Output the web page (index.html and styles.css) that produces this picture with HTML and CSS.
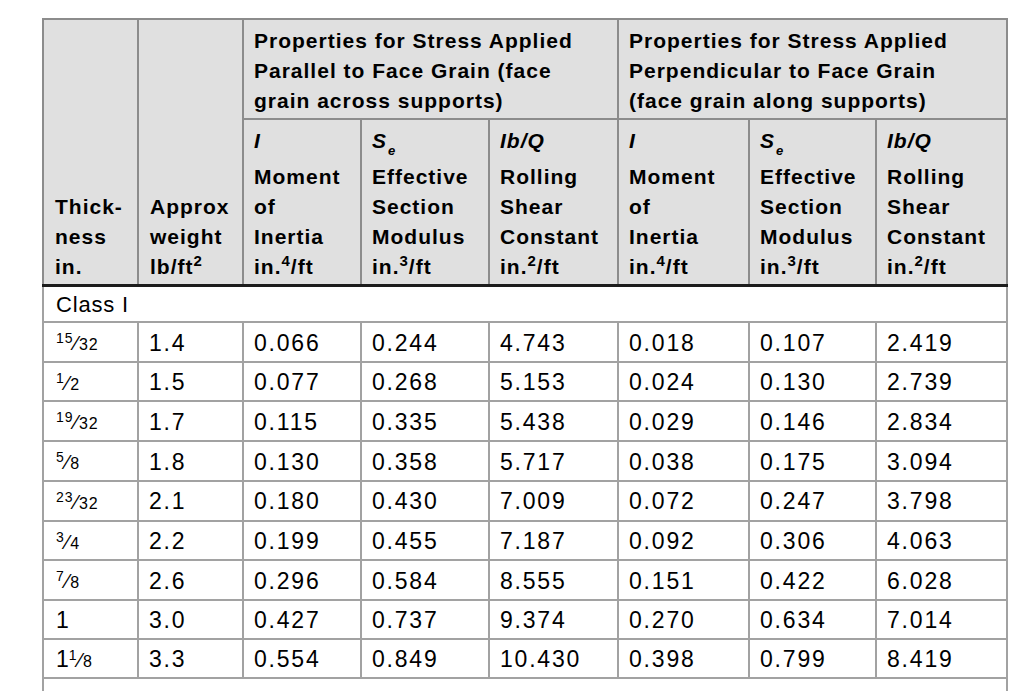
FILE: index.html
```html
<!DOCTYPE html>
<html lang="en">
<head>
<meta charset="utf-8">
<title>Plywood section properties</title>
<link rel="stylesheet" href="styles.css">
</head>
<body>
<div class="sheet">
<table class="props">
  <colgroup>
    <col class="c-thk"><col class="c-wt">
    <col class="c-a1"><col class="c-a2"><col class="c-a3">
    <col class="c-b1"><col class="c-b2"><col class="c-b3">
  </colgroup>
  <thead>
    <tr class="grp">
      <th rowspan="2" class="lh">Thick-<br>ness<br>in.</th>
      <th rowspan="2" class="lh">Approx<br>weight<br>lb/ft<sup>2</sup></th>
      <th colspan="3" class="gh">Properties for Stress Applied<br>Parallel to Face Grain (face<br>grain across supports)</th>
      <th colspan="3" class="gh">Properties for Stress Applied<br>Perpendicular to Face Grain<br>(face grain along supports)</th>
    </tr>
    <tr class="sub">
      <th><div class="sym"><i>I</i></div>Moment<br>of<br>Inertia<br>in.<sup>4</sup>/ft</th>
      <th><div class="sym"><i>S<sub>e</sub></i></div>Effective<br>Section<br>Modulus<br>in.<sup>3</sup>/ft</th>
      <th><div class="sym"><i>Ib/Q</i></div>Rolling<br>Shear<br>Constant<br>in.<sup>2</sup>/ft</th>
      <th><div class="sym"><i>I</i></div>Moment<br>of<br>Inertia<br>in.<sup>4</sup>/ft</th>
      <th><div class="sym"><i>S<sub>e</sub></i></div>Effective<br>Section<br>Modulus<br>in.<sup>3</sup>/ft</th>
      <th><div class="sym"><i>Ib/Q</i></div>Rolling<br>Shear<br>Constant<br>in.<sup>2</sup>/ft</th>
    </tr>
  </thead>
  <tbody>
    <tr class="cls"><td colspan="8">Class I</td></tr>
    <tr class="d"><td class="fr"><span class="nu">15</span><span class="sl">⁄</span><span class="de">32</span></td><td>1.4</td><td>0.066</td><td>0.244</td><td>4.743</td><td>0.018</td><td>0.107</td><td>2.419</td></tr>
    <tr class="d"><td class="fr"><span class="nu">1</span><span class="sl">⁄</span><span class="de">2</span></td><td>1.5</td><td>0.077</td><td>0.268</td><td>5.153</td><td>0.024</td><td>0.130</td><td>2.739</td></tr>
    <tr class="d"><td class="fr"><span class="nu">19</span><span class="sl">⁄</span><span class="de">32</span></td><td>1.7</td><td>0.115</td><td>0.335</td><td>5.438</td><td>0.029</td><td>0.146</td><td>2.834</td></tr>
    <tr class="d"><td class="fr"><span class="nu">5</span><span class="sl">⁄</span><span class="de">8</span></td><td>1.8</td><td>0.130</td><td>0.358</td><td>5.717</td><td>0.038</td><td>0.175</td><td>3.094</td></tr>
    <tr class="d"><td class="fr"><span class="nu">23</span><span class="sl">⁄</span><span class="de">32</span></td><td>2.1</td><td>0.180</td><td>0.430</td><td>7.009</td><td>0.072</td><td>0.247</td><td>3.798</td></tr>
    <tr class="d"><td class="fr"><span class="nu">3</span><span class="sl">⁄</span><span class="de">4</span></td><td>2.2</td><td>0.199</td><td>0.455</td><td>7.187</td><td>0.092</td><td>0.306</td><td>4.063</td></tr>
    <tr class="d"><td class="fr"><span class="nu">7</span><span class="sl">⁄</span><span class="de">8</span></td><td>2.6</td><td>0.296</td><td>0.584</td><td>8.555</td><td>0.151</td><td>0.422</td><td>6.028</td></tr>
    <tr class="d"><td class="fr">1</td><td>3.0</td><td>0.427</td><td>0.737</td><td>9.374</td><td>0.270</td><td>0.634</td><td>7.014</td></tr>
    <tr class="d"><td class="fr">1<span class="nu">1</span><span class="sl">⁄</span><span class="de">8</span></td><td>3.3</td><td>0.554</td><td>0.849</td><td>10.430</td><td>0.398</td><td>0.799</td><td>8.419</td></tr>
    <tr class="cls"><td colspan="8">&nbsp;</td></tr>
  </tbody>
</table>
</div>
</body>
</html>
```
FILE: styles.css
```css
html, body {
  margin: 0;
  padding: 0;
  background: #ffffff;
}

.sheet {
  padding: 18px 0 0 42px;
}

.props {
  border-collapse: collapse;
  table-layout: fixed;
  width: 964px;
  border: 2px solid #1c1c1c;
  font-family: "Liberation Sans", Arial, sans-serif;
  color: #000;
}

.c-thk { width: 95px; }
.c-wt { width: 105px; }
.c-a1 { width: 118px; }
.c-a2 { width: 128px; }
.c-a3 { width: 129px; }
.c-b1 { width: 131px; }
.c-b2 { width: 127px; }
.c-b3 { width: 131px; }

.props th {
  background: #e0e0e0;
  font-weight: bold;
  font-size: 21px;
  letter-spacing: 1px;
  line-height: 30px;
  text-align: left;
  vertical-align: bottom;
  border: 2px solid #8c8c8c;
  padding: 0 4px 2px 11px;
  white-space: nowrap;
}

.props th.gh {
  vertical-align: top;
  padding-top: 6px;
  padding-bottom: 2px;
  padding-left: 10px;
}

.props .sub th {
  vertical-align: top;
  padding-top: 6px;
  padding-bottom: 2px;
  padding-left: 10px;
  border-bottom: 3px solid #1c1c1c;
}

.props th.lh {
  border-bottom: 3px solid #1c1c1c;
}

.props th sup {
  font-size: 15px;
  line-height: 0;
  vertical-align: 8px;
  letter-spacing: 0;
  margin-right: 1px;
}

.sym {
  height: 36px;
  line-height: 30px;
}

.sym i {
  font-style: italic;
}

.sym sub {
  font-size: 13px;
  line-height: 0;
  vertical-align: -7px;
  margin-left: 1px;
}

.props td {
  font-size: 23px;
  letter-spacing: 1.8px;
  line-height: 33.7px;
  padding: 3px 4px 0 10px;
  border: 2px solid #a2a2a2;
  vertical-align: middle;
  white-space: nowrap;
  background: #fff;
}

.props tr.cls td {
  font-size: 22px;
  letter-spacing: 0.8px;
  line-height: 32px;
  padding-top: 2px;
  padding-left: 12px;
}

.props tbody tr.cls:first-child td {
  border-top: 3px solid #1c1c1c;
}

.props tr.cls:last-child td {
  border-bottom: none;
}

.props td.fr {
  letter-spacing: 0;
  padding-left: 12px;
}

.nu {
  font-size: 14px;
  letter-spacing: 1px;
  vertical-align: 7px;
  line-height: 0;
}

.sl {
  font-size: 20px;
  letter-spacing: 0;
  margin: 0 1px;
}

.de {
  font-size: 16px;
  letter-spacing: 1px;
  line-height: 0;
}
```
